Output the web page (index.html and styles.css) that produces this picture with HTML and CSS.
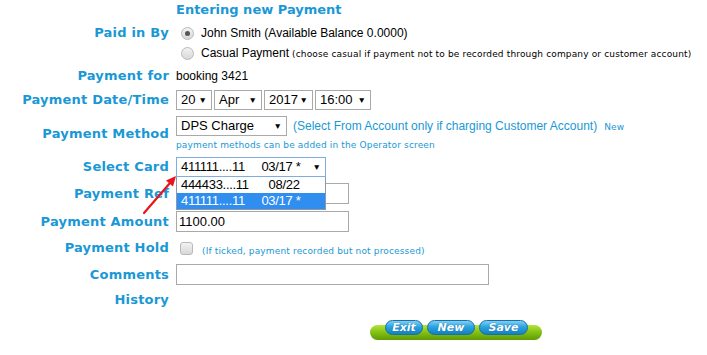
FILE: index.html
```html
<!DOCTYPE html>
<html lang="en">
<head>
  <meta charset="UTF-8">
  <title>Entering new Payment</title>
  <link rel="stylesheet" href="styles.css">
</head>
<body>
  <div class="page">
    <div class="row row-title">
      <div class="lbl"></div>
      <div class="val title">Entering new Payment</div>
    </div>

    <div class="row row-paid">
      <div class="lbl">Paid in By</div>
      <div class="val">
        <div class="radio-line"><span class="radio checked"></span>John Smith (Available Balance 0.0000)</div>
        <div class="radio-line"><span class="radio"></span>Casual Payment <span class="note dark">(choose casual if payment not to be recorded through company or customer account)</span></div>
      </div>
    </div>

    <div class="row row-for">
      <div class="lbl">Payment for</div>
      <div class="val text">booking 3421</div>
    </div>

    <div class="row row-date">
      <div class="lbl">Payment Date/Time</div>
      <div class="val selects">
        <div class="select w-day">20<span class="caret">&#9660;</span></div>
        <div class="select w-mon">Apr<span class="caret">&#9660;</span></div>
        <div class="select w-year">2017<span class="caret">&#9660;</span></div>
        <div class="select w-time">16:00<span class="caret">&#9660;</span></div>
      </div>
    </div>

    <div class="row row-method">
      <div class="lbl">Payment Method</div>
      <div class="val">
        <div class="method-line">
          <div class="select w-method">DPS Charge<span class="caret">&#9660;</span></div>
          <span class="hint">(Select From Account only if charging Customer Account)</span>
          <span class="note">New</span>
        </div>
        <div class="note">payment methods can be added in the Operator screen</div>
      </div>
    </div>

    <div class="row row-card">
      <div class="lbl">Select Card</div>
      <div class="val">
        <div class="card-wrap">
          <div class="select w-card focused"><span class="card-txt">411111....11     03/17 *</span><span class="caret">&#9660;</span></div>
          <ul class="card-list">
            <li>444433....11      08/22</li>
            <li class="active">411111....11     03/17 *</li>
          </ul>
        </div>
      </div>
    </div>

    <div class="row row-ref">
      <div class="lbl">Payment Ref</div>
      <div class="val"><div class="input w-short"></div></div>
    </div>

    <div class="row row-amount">
      <div class="lbl">Payment Amount</div>
      <div class="val"><div class="input w-short">1100.00</div></div>
    </div>

    <div class="row row-hold">
      <div class="lbl">Payment Hold</div>
      <div class="val hold"><span class="checkbox"></span><span class="note">(If ticked, payment recorded but not processed)</span></div>
    </div>

    <div class="row row-comments">
      <div class="lbl">Comments</div>
      <div class="val"><div class="input w-long"></div></div>
    </div>

    <div class="row row-history">
      <div class="lbl">History</div>
      <div class="val"></div>
    </div>

    <div class="row row-actions">
      <div class="lbl"></div>
      <div class="val">
        <div class="btnbar">
          <span class="pill p-exit">Exit</span>
          <span class="pill p-new">New</span>
          <span class="pill p-save">Save</span>
        </div>
      </div>
    </div>

    <!-- red pointer drawn over the form -->
    <svg class="pointer" width="44" height="48" viewBox="0 0 44 48">
      <line x1="6" y1="43" x2="32" y2="13" stroke="#e8141b" stroke-width="2.2" stroke-linecap="round"/>
      <polygon points="38,6 35,16.5 28,10.5" fill="#e8141b"/>
    </svg>
  </div>
</body>
</html>
```

FILE: styles.css
```css
body {
  margin: 0;
  background: #fff;
  font-family: "Liberation Sans", Arial, sans-serif;
  color: #000;
}
.page {
  position: relative;
  width: 707px;
  height: 355px;
}
.row {
  display: flex;
  align-items: center;
}
.lbl {
  width: 169px;
  flex: none;
  text-align: right;
  font-family: "DejaVu Sans", Verdana, sans-serif;
  font-weight: bold;
  font-size: 13px;
  line-height: 20px;
  letter-spacing: 0.2px;
  color: #1a98d5;
}
.val {
  margin-left: 7px;
  font-size: 12px;
}
.title {
  font-family: "DejaVu Sans", Verdana, sans-serif;
  font-weight: bold;
  font-size: 13px;
  line-height: 20px;
  color: #1a98d5;
}
.text {
  line-height: 20px;
}
.note {
  font-family: "DejaVu Sans", Verdana, sans-serif;
  font-size: 9px;
  letter-spacing: 0.15px;
  color: #1a98d5;
}
.note.dark {
  color: #000;
}

/* radios */
.row-paid {
  margin-top: 3px;
  align-items: flex-start;
}
.radio-line {
  display: flex;
  align-items: center;
  height: 20px;
  white-space: nowrap;
}
.radio-line .note {
  margin-left: 3px;
  margin-top: 2px;
}
.radio {
  width: 11px;
  height: 11px;
  border: 1px solid #b9b9b9;
  border-radius: 50%;
  background: linear-gradient(#f2f2f2, #d8d8d8);
  margin: 0 7px 0 5px;
  position: relative;
}
.radio.checked::after {
  content: "";
  position: absolute;
  left: 3px;
  top: 3px;
  width: 5px;
  height: 5px;
  border-radius: 50%;
  background: #555;
}
.row-for {
  margin-top: 3px;
}

/* select boxes */
.selects {
  display: flex;
  gap: 2px;
}
.select {
  position: relative;
  box-sizing: border-box;
  height: 20px;
  border: 1px solid #a9a9a9;
  padding-left: 4px;
  font-size: 13px;
  line-height: 18px;
  white-space: pre;
  background: #fff;
}
.caret {
  position: absolute;
  right: 4px;
  top: 0;
  font-size: 8.5px;
  line-height: 18px;
}
.w-day { width: 36px; }
.w-mon { width: 48px; }
.w-year { width: 49px; }
.w-time { width: 56px; }
.w-method { width: 111px; }
.w-card { width: 150px; }
.row-date {
  margin-top: 4px;
}
.row-method {
  margin-top: 6px;
}
.method-line {
  display: flex;
  align-items: center;
  white-space: nowrap;
}
.hint {
  color: #1a98d5;
  font-size: 12px;
  margin-left: 6px;
}
.method-line .note {
  margin-left: 7px;
  margin-top: 2px;
}
.method-line + .note {
  line-height: 14px;
  margin-top: 2px;
}

/* card select with its open list */
.row-card {
  margin-top: 5px;
  position: relative;
  z-index: 2;
}
.card-wrap {
  position: relative;
}
.select.focused {
  border-color: #7eaee0;
}
.card-txt {
  letter-spacing: -0.3px;
}
.card-list {
  position: absolute;
  top: 20px;
  left: 0;
  width: 150px;
  box-sizing: border-box;
  margin: 0;
  padding: 0;
  list-style: none;
  border: 1px solid #8c9aa8;
  border-top: none;
  background: #fff;
  font-size: 13px;
  letter-spacing: -0.3px;
}
.card-list li {
  height: 16px;
  line-height: 16px;
  padding-left: 4px;
  white-space: pre;
}
.card-list li.active {
  background: #2f8ef0;
  color: #fff;
}

/* text inputs */
.input {
  box-sizing: border-box;
  height: 21px;
  border: 1px solid #a9a9a9;
  font-size: 13px;
  line-height: 19px;
  padding-left: 2px;
}
.w-short { width: 173px; }
.w-long { width: 313px; }
.row-ref {
  margin-top: 6px;
}
.row-amount {
  margin-top: 7px;
}
.row-hold {
  margin-top: 6px;
}
.hold {
  display: flex;
  align-items: center;
}
.checkbox {
  width: 11px;
  height: 11px;
  border: 1px solid #b9b9b9;
  border-radius: 3px;
  background: linear-gradient(#f2f2f2, #d8d8d8);
  margin: 0 9px 0 4px;
}
.hold .note {
  margin-top: 5px;
}
.row-comments {
  margin-top: 6px;
}
.row-history {
  margin-top: 5px;
}

/* button strip */
.row-actions {
  margin-top: 10px;
}
.btnbar {
  position: relative;
  display: flex;
  gap: 4px;
  width: 172px;
  height: 20px;
  margin-left: 194px;
  padding-left: 15px;
  box-sizing: border-box;
}
.btnbar::before {
  content: "";
  position: absolute;
  left: 0;
  right: 0;
  bottom: 0;
  height: 15px;
  border-radius: 8px;
  background: linear-gradient(#b7e33a, #86c414 45%, #5f9a06);
}
.pill {
  position: relative;
  box-sizing: border-box;
  height: 15px;
  border-radius: 8px;
  border: 1px solid #1670aa;
  background: linear-gradient(#7fd0f6, #2ba3e0 45%, #1680c2);
  color: #fff;
  font-family: "DejaVu Sans", Verdana, sans-serif;
  font-style: italic;
  font-weight: bold;
  font-size: 11px;
  line-height: 13px;
  text-align: center;
  text-shadow: 0 0 1px #0b5d93;
}
.p-exit { width: 38px; }
.p-new { width: 48px; }
.p-save { width: 49px; }

.pointer {
  position: absolute;
  left: 138px;
  top: 170px;
}
```
